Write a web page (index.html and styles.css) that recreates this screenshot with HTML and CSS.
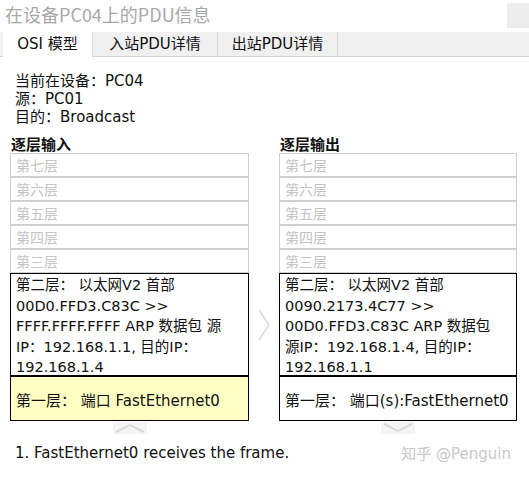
FILE: index.html
```html
<!DOCTYPE html>
<html>
<head>
<meta charset="utf-8">
<link rel="stylesheet" href="styles.css">
</head>
<body>
<div class="window">
  <div class="titlebar">
    <div class="title">在设备PC04上的PDU信息</div>
    <div class="close"></div>
  </div>
  <div class="tabs">
    <div class="tab active">OSI 模型</div>
    <div class="tab">入站PDU详情</div>
    <div class="tab">出站PDU详情</div>
  </div>
  <div class="info">
    <div>当前在设备：PC04</div>
    <div>源：PC01</div>
    <div>目的：Broadcast</div>
  </div>
  <div class="columns">
    <div class="col">
      <div class="col-head">逐层输入</div>
      <div class="layer ghost">第七层</div>
      <div class="layer ghost">第六层</div>
      <div class="layer ghost">第五层</div>
      <div class="layer ghost">第四层</div>
      <div class="layer ghost">第三层</div>
      <div class="layer l2">第二层： 以太网V2 首部<br>00D0.FFD3.C83C &gt;&gt;<br>FFFF.FFFF.FFFF ARP 数据包 源<br>IP：192.168.1.1, 目的IP：<br>192.168.1.4</div>
      <div class="layer l1 hl">第一层： 端口 FastEthernet0</div>
      <div class="nav">
        <svg width="34" height="12" viewBox="0 0 34 12"><rect x="0" y="0" width="34" height="12" fill="#f4f4f4"/><polyline points="3,10 17,3 31,10" fill="none" stroke="#d8d8d8" stroke-width="2"/></svg>
      </div>
    </div>
    <div class="mid">
      <svg width="14" height="34" viewBox="0 0 14 34"><polyline points="2,2 12,17 2,32" fill="none" stroke="#e0e0e0" stroke-width="2"/></svg>
    </div>
    <div class="col">
      <div class="col-head">逐层输出</div>
      <div class="layer ghost">第七层</div>
      <div class="layer ghost">第六层</div>
      <div class="layer ghost">第五层</div>
      <div class="layer ghost">第四层</div>
      <div class="layer ghost">第三层</div>
      <div class="layer l2">第二层： 以太网V2 首部<br>0090.2173.4C77 &gt;&gt;<br>00D0.FFD3.C83C ARP 数据包<br>源IP：192.168.1.4, 目的IP：<br>192.168.1.1</div>
      <div class="layer l1">第一层： 端口(s):FastEthernet0</div>
      <div class="nav">
        <svg width="34" height="12" viewBox="0 0 34 12"><rect x="0" y="0" width="34" height="12" fill="#f4f4f4"/><polyline points="3,2 17,9 31,2" fill="none" stroke="#d8d8d8" stroke-width="2"/></svg>
      </div>
    </div>
  </div>
  <div class="footer">
    <div class="step">1. FastEthernet0 receives the frame.</div>
    <div class="mark">知乎 @Penguin</div>
  </div>
</div>
</body>
</html>
```
FILE: styles.css
```css
html, body {
  margin: 0;
  padding: 0;
  background: #fff;
}
body {
  font-family: "DejaVu Sans", "Noto Sans CJK SC", sans-serif;
  font-size: 14px;
  color: #111;
}
.window {
  width: 529px;
  height: 480px;
  overflow: hidden;
}
.titlebar {
  display: flex;
  justify-content: space-between;
  align-items: flex-start;
  height: 32px;
}
.title {
  font-family: "Noto Sans CJK SC", sans-serif;
  font-size: 18px;
  color: #a8a8a8;
  padding-left: 5px;
  line-height: 28px;
}
.close {
  width: 22px;
  height: 25px;
  margin-top: 3px;
  background: #ececec;
}
.tabs {
  display: flex;
  height: 24px;
  background: #f0f0f0;
  border-bottom: 1px solid #d4d4d4;
  padding-left: 3px;
}
.tab {
  font-size: 15px;
  line-height: 25px;
  text-align: center;
  border-right: 1px solid #d8d8d8;
  color: #111;
}
.tab:nth-child(1) { width: 89px; }
.tab:nth-child(2) { width: 124px; }
.tab:nth-child(3) { width: 119px; }
.tab.active {
  background: #fff;
  height: 25px;
}
.info {
  padding: 15px 15px 0;
  font-size: 15px;
  line-height: 18px;
}
.columns {
  display: grid;
  grid-template-columns: 239px 30px 238px;
  margin-left: 10px;
  margin-top: 9px;
}
.col-head {
  font-family: "Noto Sans CJK SC", sans-serif;
  font-weight: bold;
  font-size: 15px;
  line-height: 18px;
  padding-left: 1px;
}
.layer {
  box-sizing: border-box;
  padding-left: 5px;
}
.ghost {
  height: 24px;
  border: 1px solid #cfcfcf;
  color: #c4c4c4;
  font-family: "Noto Sans CJK SC", sans-serif;
  font-size: 14px;
  line-height: 22px;
}
.l2 {
  border: 1px solid #000;
  border-bottom-width: 2px;
  height: 104px;
  line-height: 20.5px;
  padding-top: 1px;
  font-size: 14.5px;
  white-space: nowrap;
}
.l1 {
  border: 1px solid #000;
  border-top: none;
  height: 44px;
  padding-top: 4px;
  line-height: 40px;
  font-size: 15px;
  white-space: nowrap;
}
.hl {
  background: #ffffc4;
}
.nav {
  display: flex;
  justify-content: center;
  padding-top: 1px;
  height: 12px;
}
.mid {
  display: flex;
  justify-content: center;
  align-items: flex-start;
  grid-row: 1;
  grid-column: 2;
  padding-top: 173px;
}
.footer {
  display: flex;
  justify-content: space-between;
  align-items: center;
  padding: 8px 18px 0 15px;
}
.step {
  font-size: 15px;
}
.mark {
  font-size: 15px;
  color: #c8c8c8;
}
```
